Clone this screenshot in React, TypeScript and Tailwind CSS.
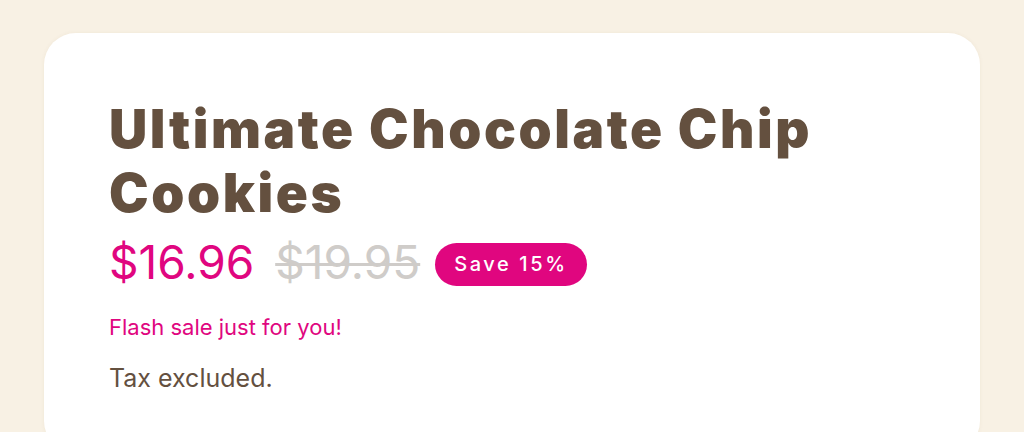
export default function App() {
  return (
    <div
      className="min-h-[432px] bg-[#f8f1e4] px-[44px] pt-[33px] overflow-hidden"
      style={{ fontFamily: "Inter, 'Noto Sans', sans-serif" }}
    >
      <div className="bg-white rounded-[32px] shadow-[0_0_4px_rgba(120,90,40,0.06)] px-[65px] pt-[64px] pb-[40px] min-h-[420px]">
        <h1 className="text-[#64503f] text-[53px] leading-[64px] font-black tracking-[2.6px] max-w-[780px]">
          Ultimate Chocolate Chip Cookies
        </h1>
        <div className="flex items-center mt-[9px]">
          <span className="text-[#e0067f] text-[46px] leading-[56px] font-normal mr-[21px]">
            $16.96
          </span>
          <span className="text-[#cfccc9] text-[46px] leading-[56px] font-normal line-through decoration-[3px] mr-[15px]">
            $19.95
          </span>
          <span className="bg-[#e0067f] text-white rounded-full h-[43px] mt-[4px] pl-[19px] pr-[19px] flex items-center text-[20px] font-medium tracking-[2.6px]">
            Save 15%
          </span>
        </div>
        <p className="text-[#e0067f] text-[22px] leading-[28px] mt-[23px]">
          Flash sale just for you!
        </p>
        <p className="text-[#64503f] text-[25px] leading-[32px] mt-[21px]">
          Tax excluded.
        </p>
      </div>
    </div>
  );
}
